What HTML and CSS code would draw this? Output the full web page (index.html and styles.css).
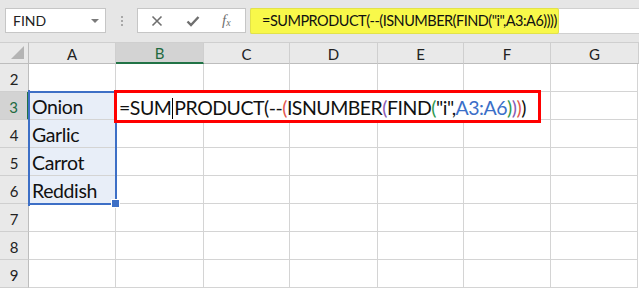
FILE: index.html
```html
<!DOCTYPE html>
<html>
<head>
<meta charset="utf-8">
<link rel="stylesheet" href="styles.css">
</head>
<body>
<div class="toolbar">
  <div class="namebox"><span class="nb-text">FIND</span><span class="nb-arrow"></span></div>
  <div class="sep"><i></i><i></i><i></i></div>
  <div class="fxbox">
    <svg class="ico" width="12" height="12" viewBox="0 0 12 12"><path d="M1.5 1.5 L10.5 10.5 M10.5 1.5 L1.5 10.5" stroke="#6f6f6f" stroke-width="1.6" fill="none"/></svg>
    <svg class="ico" width="14" height="12" viewBox="0 0 14 12"><path d="M1.5 6.5 L5 10 L12.5 2" stroke="#6f6f6f" stroke-width="2.4" fill="none"/></svg>
    <span class="fx">f<sub>x</sub></span>
  </div>
  <div class="formula"><span class="hl">=SUMPRODUCT(--(ISNUMBER(FIND("i",A3:A6))))</span></div>
</div>
<div class="sheet">
  <div class="hdr corner"><span class="tri"></span></div>
  <div class="hdr col">A</div>
  <div class="hdr col sel">B</div>
  <div class="hdr col">C</div>
  <div class="hdr col">D</div>
  <div class="hdr col">E</div>
  <div class="hdr col">F</div>
  <div class="hdr col">G</div>

  <div class="hdr row">2</div>
  <div class="cell"></div><div class="cell"></div><div class="cell"></div><div class="cell"></div><div class="cell"></div><div class="cell"></div><div class="cell"></div>

  <div class="hdr row sel">3</div>
  <div class="cell in">Onion</div><div class="cell"></div><div class="cell"></div><div class="cell"></div><div class="cell"></div><div class="cell"></div><div class="cell"></div>

  <div class="hdr row">4</div>
  <div class="cell in">Garlic</div><div class="cell"></div><div class="cell"></div><div class="cell"></div><div class="cell"></div><div class="cell"></div><div class="cell"></div>

  <div class="hdr row">5</div>
  <div class="cell in">Carrot</div><div class="cell"></div><div class="cell"></div><div class="cell"></div><div class="cell"></div><div class="cell"></div><div class="cell"></div>

  <div class="hdr row">6</div>
  <div class="cell in">Reddish</div><div class="cell"></div><div class="cell"></div><div class="cell"></div><div class="cell"></div><div class="cell"></div><div class="cell"></div>

  <div class="hdr row">7</div>
  <div class="cell"></div><div class="cell"></div><div class="cell"></div><div class="cell"></div><div class="cell"></div><div class="cell"></div><div class="cell"></div>

  <div class="hdr row">8</div>
  <div class="cell"></div><div class="cell"></div><div class="cell"></div><div class="cell"></div><div class="cell"></div><div class="cell"></div><div class="cell"></div>

  <div class="hdr row">9</div>
  <div class="cell"></div><div class="cell"></div><div class="cell"></div><div class="cell"></div><div class="cell"></div><div class="cell"></div><div class="cell"></div>

  <div class="range">
    <span class="h h-tl"></span><span class="h h-tr"></span><span class="h h-bl"></span><span class="h h-br"></span>
  </div>
  <div class="editbox"><span class="etext">=SUM<span class="caret"></span>PRODUCT(--<span class="p1">(</span>ISNUMBER<span class="p2">(</span>FIND<span class="p3">(</span>"i",<span class="ref">A3:A6</span><span class="p3">)</span><span class="p2">)</span><span class="p1">)</span>)</span></div>
</div>
</body>
</html>
```
FILE: styles.css
```css
* { box-sizing: border-box; }
html, body { margin: 0; padding: 0; }
body {
  width: 639px;
  height: 289px;
  overflow: hidden;
  background: #ffffff;
  font-family: Lato, "Liberation Sans", sans-serif;
  color: #000;
}

.toolbar {
  height: 42px;
  background: #e6e6e6;
  display: flex;
  align-items: flex-start;
  padding: 8px 0 0 5px;
}

.namebox {
  width: 101px;
  height: 25px;
  background: #fff;
  border: 1px solid #c6c6c6;
  display: flex;
  align-items: center;
  justify-content: space-between;
  padding: 0 6px 0 7px;
}
.nb-text { font-size: 14px; color: #222; }
.nb-arrow {
  width: 0; height: 0;
  border-left: 4px solid transparent;
  border-right: 4px solid transparent;
  border-top: 4px solid #7a7a7a;
}

.sep {
  margin-left: 15px;
  width: 2px;
  height: 25px;
  display: flex;
  flex-direction: column;
  justify-content: center;
  gap: 2px;
}
.sep i { display: block; width: 2px; height: 2px; background: #a8a8a8; }

.fxbox {
  margin-left: 14px;
  width: 109px;
  height: 25px;
  background: #fff;
  border: 1px solid #c6c6c6;
  display: flex;
  align-items: center;
  padding-left: 13px;
}
.fxbox .ico:nth-child(1) { margin-right: 23px; }
.fxbox .ico:nth-child(2) { margin-right: 22px; }
.fx {
  font-family: "Liberation Serif", serif;
  font-style: italic;
  font-size: 15px;
  color: #6f6f6f;
  line-height: 1;
}
.fx sub { font-size: 10px; vertical-align: -1px; }

.formula {
  margin-left: 4px;
  flex: 1;
  height: 26px;
  background: #fff;
  border-top: 1px solid #d0d0d0;
  border-bottom: 1px solid #d0d0d0;
  display: flex;
}
.hl {
  width: 309px;
  height: 26px;
  margin-top: -1px;
  background: #f8f84a;
  border: 1px solid #e2e24a;
  border-radius: 2px;
  font-size: 14.5px;
  letter-spacing: -0.5px;
  line-height: 24px;
  padding-left: 11px;
  white-space: nowrap;
  color: #111;
}

.sheet {
  position: relative;
  display: grid;
  grid-template-columns: 29px 87px 88px 86px 88px 86px 87px 87px 1px;
  grid-template-rows: 22px repeat(8, 28px);
}

.hdr {
  background: #e9e9e9;
  color: #222;
  font-size: 15px;
  display: flex;
  align-items: center;
  justify-content: center;
}
.hdr.col {
  border-top: 1px solid #cfcfcf;
  border-right: 1px solid #cfcfcf;
  border-bottom: 1px solid #bdbdbd;
  padding-top: 1px;
}
.hdr.corner {
  border-top: 1px solid #cfcfcf;
  border-right: 1px solid #bdbdbd;
  border-bottom: 1px solid #bdbdbd;
  position: relative;
}
.tri {
  position: absolute;
  right: 4px;
  bottom: 4px;
  width: 0; height: 0;
  border-left: 13px solid transparent;
  border-bottom: 13px solid #b4b4b4;
}
.hdr.col:nth-child(8) { grid-column: 8 / span 2; }
.hdr.row {
  border-right: 1px solid #bdbdbd;
  border-bottom: 1px solid #cfcfcf;
  grid-column: 1;
  padding-top: 3px;
}
.hdr.sel { background: #d3d3d3; color: #1e6a3f; }
.hdr.col.sel { border-bottom: 2px solid #217346; }
.hdr.row.sel { border-right: 2px solid #217346; }

.cell {
  border-right: 1px solid #d4d4d4;
  border-bottom: 1px solid #d4d4d4;
  font-size: 19.5px;
  letter-spacing: -0.4px;
  display: flex;
  align-items: center;
  padding: 2px 0 0 3px;
  color: #111;
  white-space: nowrap;
}
.cell.in { background: #e8eef8; }

.range {
  position: absolute;
  left: 28px;
  top: 49px;
  width: 89px;
  height: 114px;
  border: 2px solid #3d6fc6;
}
.h { position: absolute; background: #3d6fc6; }
.h-tl { left: -2px; top: -3px; width: 2px; height: 5px; }
.h-tr { right: -3px; top: -3px; width: 4px; height: 5px; }
.h-bl { left: -2px; bottom: -3px; width: 2px; height: 5px; }
.h-br { right: -5px; bottom: -5px; width: 7px; height: 7px; border: 1px solid #fff; box-sizing: content-box; }

.editbox {
  position: absolute;
  left: 114px;
  top: 48px;
  width: 427px;
  height: 33px;
  border: 3px solid #ff0000;
  background: #fff;
  display: flex;
  align-items: center;
  padding-left: 2px;
}
.etext {
  font-size: 19.5px;
  letter-spacing: -0.5px;
  white-space: nowrap;
  color: #111;
  padding-top: 2px;
}
.caret {
  display: inline-block;
  width: 1px;
  height: 21px;
  background: #000;
  vertical-align: -4px;
  margin: 0 1px;
}
.p1 { color: #e4574f; }
.p2 { color: #8a5bb5; }
.p3 { color: #2f9a52; }
.ref { color: #3b6fc8; }
```
